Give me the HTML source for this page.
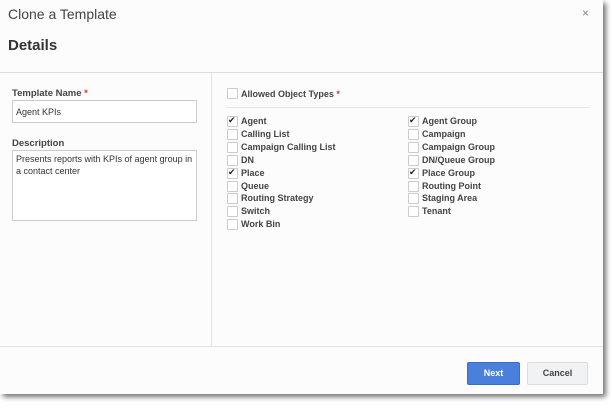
<!DOCTYPE html>
<html><head><style>
*{box-sizing:border-box;margin:0;padding:0}
body{width:612px;height:408px;background:#fff;font-family:"Liberation Sans",sans-serif;position:relative;overflow:hidden;color:#333}
.dlg{position:absolute;left:0;top:0;width:603px;height:394px;background:#fcfcfc;box-shadow:3px 3px 5px rgba(0,0,0,.55);}
.a{position:absolute;white-space:nowrap}
.lbl{font-size:9.5px;font-weight:bold;color:#444}
.req{color:#d33}
.cb{position:absolute;width:11px;height:11px;border:1px solid #ccc;background:#fff;border-radius:1px}
.ck{position:absolute;font-size:9px;left:0px;top:-2px;color:#222}
.it{position:absolute;font-size:9px;font-weight:bold;color:#444;white-space:nowrap}
</style></head><body>
<div class="dlg">
<div class="a" style="left:8px;top:6px;font-size:14px;color:#444">Clone a Template</div>
<div class="a" style="left:582px;top:6px;font-size:12px;color:#888">×</div>
<div class="a" style="left:8px;top:37px;font-size:15px;font-weight:bold;color:#333">Details</div>
<div class="a" style="left:0;top:72px;width:603px;height:1px;background:#ddd"></div>
<div class="a" style="left:211px;top:73px;width:1px;height:273px;background:#e2e2e2"></div>
<div class="a" style="left:0;top:346px;width:603px;height:1px;background:#e2e2e2"></div>
<div class="a lbl" style="left:12px;top:88px">Template Name <span class="req">*</span></div>
<div class="a" style="left:12px;top:100px;width:185px;height:23px;border:1px solid #ccc;background:#fff;font-size:9px;padding:6px 3px;color:#333">Agent KPIs</div>
<div class="a lbl" style="left:12px;top:138px">Description</div>
<div class="a" style="left:12px;top:150px;width:185px;height:71px;border:1px solid #ccc;background:#fff;font-size:9px;padding:2px 3px;color:#333;white-space:normal;line-height:12px">Presents reports with KPIs of agent group in a contact center</div>
<div class="cb" style="left:227px;top:88px"></div>
<div class="a lbl" style="left:241px;top:89px;font-size:9px">Allowed Object Types <span class="req">*</span></div>
<div class="a" style="left:226px;top:107px;width:364px;height:1px;background:#e6e6e6"></div>
<div id="L"></div>
</div>
<div class="a" style="left:467px;top:362px;width:53px;height:23px;background:#4a7fdc;border:1px solid #3b6ccc;border-radius:2px;color:#fff;font-size:9px;font-weight:bold;text-align:center;line-height:21px">Next</div>
<div class="a" style="left:527px;top:362px;width:61px;height:23px;background:#f1f2f4;border:1px solid #ddd;border-radius:2px;color:#444;font-size:9px;font-weight:bold;text-align:center;line-height:21px">Cancel</div>
<script>
var L=[["Agent",1],["Calling List"],["Campaign Calling List"],["DN"],["Place",1],["Queue"],["Routing Strategy"],["Switch"],["Work Bin"]];
var R=[["Agent Group",1],["Campaign"],["Campaign Group"],["DN/Queue Group"],["Place Group",1],["Routing Point"],["Staging Area"],["Tenant"]];
var h="";
function add(a,x){a.forEach(function(e,i){var y=116+i*12.9;h+='<div class="cb" style="left:'+x+'px;top:'+y+'px">'+(e[1]?'<span class="ck">✔</span>':'')+'</div><div class="it" style="left:'+(x+14)+'px;top:'+(y)+'px">'+e[0]+'</div>';});}
add(L,227);add(R,408);
document.getElementById("L").outerHTML=h;
</script>
</body></html>
